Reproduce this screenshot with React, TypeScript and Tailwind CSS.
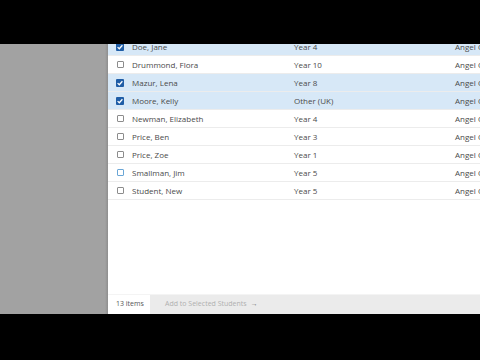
import React from "react";

type Row = { name: string; year: string; checked: boolean; hover?: boolean };

const rows: Row[] = [
  { name: "Doe, Jane", year: "Year 4", checked: true },
  { name: "Drummond, Flora", year: "Year 10", checked: false },
  { name: "Mazur, Lena", year: "Year 8", checked: true },
  { name: "Moore, Kelly", year: "Other (UK)", checked: true },
  { name: "Newman, Elizabeth", year: "Year 4", checked: false },
  { name: "Price, Ben", year: "Year 3", checked: false },
  { name: "Price, Zoe", year: "Year 1", checked: false },
  { name: "Smallman, Jim", year: "Year 5", checked: false, hover: true },
  { name: "Student, New", year: "Year 5", checked: false },
];

function Box({ checked, hover }: { checked: boolean; hover?: boolean }) {
  if (checked) {
    return (
      <svg width="8" height="8" viewBox="0 0 8 8" className="shrink-0">
        <rect x="0" y="0" width="8" height="8" rx="1" fill="#1f5da6" />
        <path d="M1.6 4.1 L3.3 5.7 L6.4 2.3" stroke="#fff" strokeWidth="1.3" fill="none" />
      </svg>
    );
  }
  return (
    <div
      className={`w-[7px] h-[7px] shrink-0 rounded-[1px] border bg-white ${
        hover ? "border-[#6aa6d6]" : "border-[#8c8c8c]"
      }`}
    />
  );
}

export default function App() {
  return (
    <div
      className="w-[480px] h-[360px] bg-black flex flex-col overflow-hidden"
      style={{ fontFamily: '"Open Sans", "Noto Sans", sans-serif' }}
    >
      <div className="h-[44px] shrink-0 bg-black" />
      <div className="h-[270px] shrink-0 flex">
        <div className="w-[105px] shrink-0 bg-[#a2a2a2]" />
        <div className="w-[3px] shrink-0 bg-gradient-to-r from-[#a2a2a2] to-[#8e8e8e]" />
        <div className="flex-1 min-w-0 bg-white flex flex-col overflow-hidden">
          <div className="flex-1 overflow-hidden">
            <div className="-mt-[6px]">
              {rows.map((r) => (
                <div
                  key={r.name}
                  className={`h-[18px] flex items-center border-b border-[#ececec] text-[8px] text-[#4a4a4a] ${
                    r.checked ? "bg-[#d7e8f7]" : "bg-white"
                  }`}
                >
                  <div className="w-[24px] shrink-0 flex justify-end pr-[8px]">
                    <Box checked={r.checked} hover={r.hover} />
                  </div>
                  <div className="w-[162px] shrink-0 whitespace-nowrap">{r.name}</div>
                  <div className="w-[161px] shrink-0 whitespace-nowrap">{r.year}</div>
                  <div className="shrink-0 whitespace-nowrap">Angel Oak</div>
                </div>
              ))}
            </div>
          </div>
          <div className="h-[20px] shrink-0 flex bg-[#ebebeb] border-t border-[#f4f4f4]">
            <div className="w-[42px] shrink-0 bg-white flex items-center pl-[8px] text-[7px] text-[#555] whitespace-nowrap">
              13 items
            </div>
            <div className="flex items-center pl-[15px] text-[7px] text-[#b0b0b0] whitespace-nowrap">
              Add to Selected Students
              <span className="ml-[4px] text-[#777] text-[7px]">→</span>
            </div>
          </div>
        </div>
      </div>
      <div className="flex-1 bg-black" />
    </div>
  );
}
